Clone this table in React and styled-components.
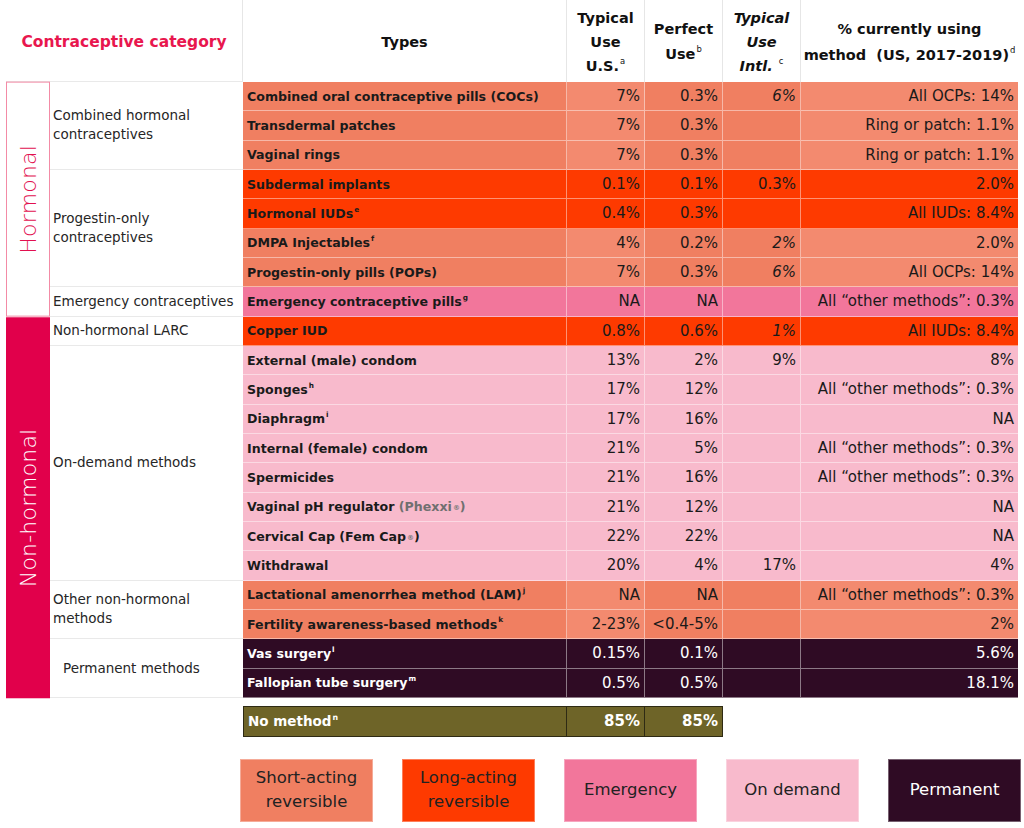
import React from 'react';
import styled, { createGlobalStyle, css } from 'styled-components';

const GlobalStyle = createGlobalStyle`
  * { box-sizing: border-box; }
  body {
    margin: 0;
    background: #fff;
    font-family: "DejaVu Sans", "Noto Sans", sans-serif;
    color: #1b1b1b;
  }
`;

const FILL = {
  short: '#F07F61',
  shortLight: '#F38A6F',
  long: '#FE3A00',
  emergency: '#F2769B',
  demand: '#F8BACC',
  permanent: '#2F0B24',
};

const Page = styled.div`
  width: 1024px;
  height: 828px;
  padding-left: 6px;
  overflow: hidden;
`;

const Table = styled.div`
  display: grid;
  grid-template-columns: 44px 193px 324px 78px 78px 78px 217px;
  grid-template-rows: 82px repeat(21, 29.33px);
`;

const Head = styled.div`
  grid-column: span ${(p) => p.$cols || 1};
  display: flex;
  align-items: center;
  justify-content: center;
  text-align: center;
  font-weight: bold;
  font-size: ${(p) => p.$size || 14.5}px;
  line-height: ${(p) => p.$lh || 24}px;
  color: ${(p) => (p.$accent ? '#E8174E' : '#111')};
  border-right: ${(p) => (p.$last ? 'none' : '1px solid #e6e6e6')};
  ${(p) =>
    p.$accent &&
    css`
      border-bottom: 1px solid #e9e9e9;
    `}
  padding-top: 2px;
`;

const Ital = styled.span`
  font-style: italic;
`;

const Sup = styled.sup`
  font-size: 0.58em;
  line-height: 0;
  vertical-align: 0.85em;
  font-style: normal;
  font-weight: ${(p) => (p.$light ? 'normal' : 'inherit')};
  margin-left: 1px;
`;

const Category = styled.div`
  grid-row: span ${(p) => p.$span};
  display: flex;
  align-items: center;
  justify-content: center;
  writing-mode: vertical-rl;
  transform: rotate(180deg);
  font-size: 22px;
  font-weight: 200;
  letter-spacing: 0.2px;
  ${(p) =>
    p.$filled
      ? css`
          background: #e1004b;
          color: #fff;
        `
      : css`
          border: 1.5px solid #f38ba6;
          color: #e2104f;
        `}
`;

const Group = styled.div`
  grid-row: span ${(p) => p.$span};
  display: flex;
  align-items: center;
  padding: 0 4px 0 ${(p) => (p.$indent ? 13 : 3)}px;
  font-size: 13.5px;
  line-height: 19px;
  color: #262626;
  white-space: nowrap;
  border-bottom: 1px solid #e9e9e9;
`;

const Cell = styled.div`
  display: flex;
  align-items: center;
  justify-content: flex-end;
  padding: 0 4px;
  background: ${(p) => p.$bg};
  color: ${(p) => (p.$dark ? '#fff' : '#1a1a1a')};
  border-bottom: 1px solid rgba(255, 255, 255, 0.45);
  border-right: ${(p) => (p.$last ? 'none' : '1px solid rgba(255, 255, 255, 0.45)')};
  font-size: 15px;
  font-style: ${(p) => (p.$italic ? 'italic' : 'normal')};
  white-space: nowrap;
`;

const TypeCell = styled(Cell)`
  justify-content: flex-start;
  font-weight: bold;
  font-size: 12.6px;
`;

const Muted = styled.span`
  color: #707070;
`;

const Reg = styled.span`
  font-size: 0.55em;
  vertical-align: 0.15em;
  color: #777;
  margin-left: 1px;
`;

const NoMethod = styled.div`
  display: grid;
  grid-template-columns: 323px 78px 77px;
  width: 480px;
  height: 31px;
  margin: 8px 0 0 237px;
  background: #6e6428;
  border: 1px solid #2e2a14;
  color: #fff;
  font-weight: bold;
`;

const NoMethodCell = styled.div`
  display: flex;
  align-items: center;
  justify-content: ${(p) => (p.$left ? 'flex-start' : 'flex-end')};
  padding: 0 4px;
  font-size: ${(p) => (p.$left ? 13.5 : 15)}px;
  border-right: ${(p) => (p.$last ? 'none' : '1px solid #2e2a14')};
`;

const Legend = styled.div`
  display: flex;
  gap: 29px;
  margin: 22px 0 0 234px;
`;

const Swatch = styled.div`
  width: 133px;
  height: 63px;
  display: flex;
  align-items: center;
  justify-content: center;
  text-align: center;
  background: ${(p) => p.$bg};
  color: ${(p) => (p.$dark ? '#fff' : '#222')};
  font-size: 16.5px;
  line-height: 24px;
  border: 1px solid rgba(255, 255, 255, 0.35);
`;

const r = (kind, name, us, perfect, intl, current, intlItalic = false) => ({
  kind,
  name,
  us,
  perfect,
  intl,
  current,
  intlItalic,
});

const OTHER = 'All \u201Cother methods\u201D: 0.3%';

const sections = [
  {
    label: 'Hormonal',
    filled: false,
    groups: [
      {
        label: (
          <>
            Combined hormonal
            <br />
            contraceptives
          </>
        ),
        rows: [
          r('short', 'Combined oral contraceptive pills (COCs)', '7%', '0.3%', '6%', 'All OCPs: 14%', true),
          r('short', 'Transdermal patches', '7%', '0.3%', '', 'Ring or patch: 1.1%'),
          r('short', 'Vaginal rings', '7%', '0.3%', '', 'Ring or patch: 1.1%'),
        ],
      },
      {
        label: (
          <>
            Progestin-only
            <br />
            contraceptives
          </>
        ),
        rows: [
          r('long', 'Subdermal implants', '0.1%', '0.1%', '0.3%', '2.0%'),
          r('long', <>Hormonal IUDs<Sup>e</Sup></>, '0.4%', '0.3%', '', 'All IUDs: 8.4%'),
          r('short', <>DMPA Injectables<Sup>f</Sup></>, '4%', '0.2%', '2%', '2.0%', true),
          r('short', 'Progestin-only pills (POPs)', '7%', '0.3%', '6%', 'All OCPs: 14%', true),
        ],
      },
      {
        label: 'Emergency contraceptives',
        rows: [r('emergency', <>Emergency contraceptive pills<Sup>g</Sup></>, 'NA', 'NA', '', OTHER)],
      },
    ],
  },
  {
    label: 'Non-hormonal',
    filled: true,
    groups: [
      {
        label: 'Non-hormonal LARC',
        rows: [r('long', 'Copper IUD', '0.8%', '0.6%', '1%', 'All IUDs: 8.4%', true)],
      },
      {
        label: 'On-demand methods',
        rows: [
          r('demand', 'External (male) condom', '13%', '2%', '9%', '8%'),
          r('demand', <>Sponges<Sup>h</Sup></>, '17%', '12%', '', OTHER),
          r('demand', <>Diaphragm<Sup>i</Sup></>, '17%', '16%', '', 'NA'),
          r('demand', 'Internal (female) condom', '21%', '5%', '', OTHER),
          r('demand', 'Spermicides', '21%', '16%', '', OTHER),
          r(
            'demand',
            <>
              {'Vaginal pH regulator\u00A0'}
              <Muted>
                (Phexxi<Reg>®</Reg>)
              </Muted>
            </>,
            '21%',
            '12%',
            '',
            'NA'
          ),
          r(
            'demand',
            <>
              Cervical Cap (Fem Cap<Reg>®</Reg>)
            </>,
            '22%',
            '22%',
            '',
            'NA'
          ),
          r('demand', 'Withdrawal', '20%', '4%', '17%', '4%'),
        ],
      },
      {
        label: (
          <>
            Other non-hormonal
            <br />
            methods
          </>
        ),
        rows: [
          r('short', <>Lactational amenorrhea method (LAM)<Sup>j</Sup></>, 'NA', 'NA', '', OTHER),
          r('short', <>Fertility awareness-based methods<Sup>k</Sup></>, '2-23%', '<0.4-5%', '', '2%'),
        ],
      },
      {
        label: 'Permanent methods',
        indent: true,
        rows: [
          r('permanent', <>Vas surgery<Sup>l</Sup></>, '0.15%', '0.1%', '', '5.6%'),
          r('permanent', <>Fallopian tube surgery<Sup>m</Sup></>, '0.5%', '0.5%', '', '18.1%'),
        ],
      },
    ],
  },
];

function Row({ row }) {
  const base = FILL[row.kind];
  const light = row.kind === 'short' ? FILL.shortLight : base;
  const dark = row.kind === 'permanent';
  return (
    <>
      <TypeCell $bg={base} $dark={dark}>
        <span>{row.name}</span>
      </TypeCell>
      <Cell $bg={light} $dark={dark}>
        {row.us}
      </Cell>
      <Cell $bg={base} $dark={dark}>
        {row.perfect}
      </Cell>
      <Cell $bg={base} $dark={dark} $italic={row.intlItalic}>
        {row.intl}
      </Cell>
      <Cell $bg={light} $dark={dark} $last>
        {row.current}
      </Cell>
    </>
  );
}

const legend = [
  { bg: FILL.short, label: <>Short-acting<br />reversible</> },
  { bg: FILL.long, label: <>Long-acting<br />reversible</> },
  { bg: FILL.emergency, label: 'Emergency' },
  { bg: FILL.demand, label: 'On demand' },
  { bg: FILL.permanent, label: 'Permanent', dark: true },
];

export default function App() {
  return (
    <>
      <GlobalStyle />
      <Page>
        <Table>
          <Head $cols={2} $accent $size={15.5}>
            Contraceptive category
          </Head>
          <Head>Types</Head>
          <Head $lh={24}>
            <span>
              Typical
              <br />
              Use
              <br />
              U.S.<Sup $light>a</Sup>
            </span>
          </Head>
          <Head $lh={25}>
            <span>
              Perfect
              <br />
              Use<Sup $light>b</Sup>
            </span>
          </Head>
          <Head $lh={24}>
            <span>
              <Ital>
                Typical
                <br />
                Use
                <br />
                Intl.
              </Ital>{' '}
              <Sup $light>c</Sup>
            </span>
          </Head>
          <Head $lh={26} $last>
            <span>
              % currently using
              <br />
              method&nbsp;&nbsp;(US, 2017-2019)<Sup $light>d</Sup>
            </span>
          </Head>

          {sections.map((sec) => {
            const total = sec.groups.reduce((n, g) => n + g.rows.length, 0);
            return (
              <React.Fragment key={sec.label}>
                <Category $span={total} $filled={sec.filled}>
                  {sec.label}
                </Category>
                {sec.groups.map((g, gi) => (
                  <React.Fragment key={gi}>
                    <Group $span={g.rows.length} $indent={g.indent}>
                      <span>{g.label}</span>
                    </Group>
                    {g.rows.map((row, ri) => (
                      <Row key={ri} row={row} />
                    ))}
                  </React.Fragment>
                ))}
              </React.Fragment>
            );
          })}
        </Table>

        <NoMethod>
          <NoMethodCell $left>
            <span>
              No method<Sup>n</Sup>
            </span>
          </NoMethodCell>
          <NoMethodCell>85%</NoMethodCell>
          <NoMethodCell $last>85%</NoMethodCell>
        </NoMethod>

        <Legend>
          {legend.map((l, i) => (
            <Swatch key={i} $bg={l.bg} $dark={l.dark}>
              <span>{l.label}</span>
            </Swatch>
          ))}
        </Legend>
      </Page>
    </>
  );
}
